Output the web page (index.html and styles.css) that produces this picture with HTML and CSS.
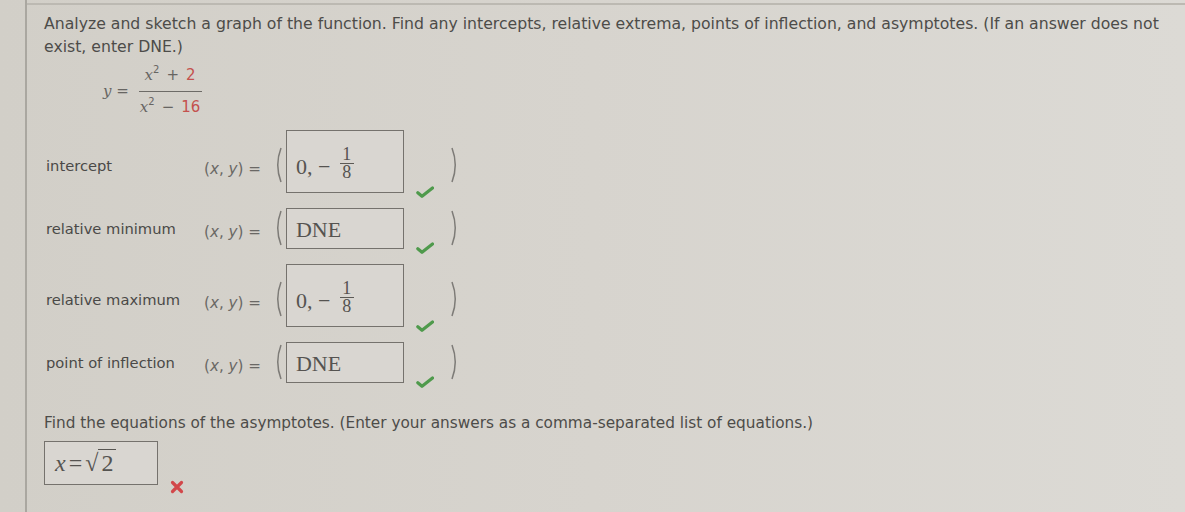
FILE: index.html
```html
<!DOCTYPE html>
<html lang="en">
<head>
<meta charset="utf-8">
<title>Analyze and sketch a graph</title>
<link rel="stylesheet" href="styles.css">
</head>
<body>
<div class="frame">
  <div class="panel">
    <p class="prompt">Analyze and sketch a graph of the function. Find any intercepts, relative extrema, points of inflection, and asymptotes. (If an answer does not exist, enter DNE.)</p>

    <div class="function">
      <span class="lhs"><i>y</i> =</span>
      <span class="frac">
        <span class="num"><i>x</i><sup>2</sup><span class="op">+</span><span class="red">2</span></span>
        <span class="den"><i>x</i><sup>2</sup><span class="op">−</span><span class="red">16</span></span>
      </span>
    </div>

    <div class="rows">
      <div class="row">
        <span class="label">intercept</span>
        <span class="xy">(<i>x</i>, <i>y</i>) = <svg class="paren" viewBox="0 0 8 36" width="8" height="36"><path d="M7 1 Q0.5 18 7 35" fill="none" stroke="#7d7b77" stroke-width="1.5"/></svg></span>
        <span class="box tall">0, − <span class="mfrac"><span>1</span><span class="bar"></span><span>8</span></span></span>
        <svg class="check" viewBox="0 0 18 12" width="18" height="12"><path d="M1.8 6.8 L6 10.3 L16.5 2" fill="none" stroke="#4f9a4c" stroke-width="3.2" stroke-linecap="round" stroke-linejoin="round"/></svg>
        <span class="cp"><svg class="paren" viewBox="0 0 8 36" width="8" height="36"><path d="M1 1 Q7.5 18 1 35" fill="none" stroke="#7d7b77" stroke-width="1.5"/></svg></span>
      </div>

      <div class="row">
        <span class="label">relative minimum</span>
        <span class="xy">(<i>x</i>, <i>y</i>) = <svg class="paren" viewBox="0 0 8 36" width="8" height="36"><path d="M7 1 Q0.5 18 7 35" fill="none" stroke="#7d7b77" stroke-width="1.5"/></svg></span>
        <span class="box short">DNE</span>
        <svg class="check" viewBox="0 0 18 12" width="18" height="12"><path d="M1.8 6.8 L6 10.3 L16.5 2" fill="none" stroke="#4f9a4c" stroke-width="3.2" stroke-linecap="round" stroke-linejoin="round"/></svg>
        <span class="cp"><svg class="paren" viewBox="0 0 8 36" width="8" height="36"><path d="M1 1 Q7.5 18 1 35" fill="none" stroke="#7d7b77" stroke-width="1.5"/></svg></span>
      </div>

      <div class="row">
        <span class="label">relative maximum</span>
        <span class="xy">(<i>x</i>, <i>y</i>) = <svg class="paren" viewBox="0 0 8 36" width="8" height="36"><path d="M7 1 Q0.5 18 7 35" fill="none" stroke="#7d7b77" stroke-width="1.5"/></svg></span>
        <span class="box tall">0, − <span class="mfrac"><span>1</span><span class="bar"></span><span>8</span></span></span>
        <svg class="check" viewBox="0 0 18 12" width="18" height="12"><path d="M1.8 6.8 L6 10.3 L16.5 2" fill="none" stroke="#4f9a4c" stroke-width="3.2" stroke-linecap="round" stroke-linejoin="round"/></svg>
        <span class="cp"><svg class="paren" viewBox="0 0 8 36" width="8" height="36"><path d="M1 1 Q7.5 18 1 35" fill="none" stroke="#7d7b77" stroke-width="1.5"/></svg></span>
      </div>

      <div class="row">
        <span class="label">point of inflection</span>
        <span class="xy">(<i>x</i>, <i>y</i>) = <svg class="paren" viewBox="0 0 8 36" width="8" height="36"><path d="M7 1 Q0.5 18 7 35" fill="none" stroke="#7d7b77" stroke-width="1.5"/></svg></span>
        <span class="box short">DNE</span>
        <svg class="check" viewBox="0 0 18 12" width="18" height="12"><path d="M1.8 6.8 L6 10.3 L16.5 2" fill="none" stroke="#4f9a4c" stroke-width="3.2" stroke-linecap="round" stroke-linejoin="round"/></svg>
        <span class="cp"><svg class="paren" viewBox="0 0 8 36" width="8" height="36"><path d="M1 1 Q7.5 18 1 35" fill="none" stroke="#7d7b77" stroke-width="1.5"/></svg></span>
      </div>
    </div>

    <p class="prompt second">Find the equations of the asymptotes. (Enter your answers as a comma-separated list of equations.)</p>

    <div class="answer">
      <span class="box eq"><i>x</i><span class="eqs">=</span>√<span class="radicand">2</span></span>
      <svg class="cross" viewBox="0 0 14 14" width="14" height="14"><path d="M2.5 2.5 L11.5 11.5 M11.5 2.5 L2.5 11.5" fill="none" stroke="#d2474a" stroke-width="3.2" stroke-linecap="round"/></svg>
    </div>
  </div>
</div>
</body>
</html>
```

FILE: styles.css
```css
html, body {
  margin: 0;
  padding: 0;
}

body {
  width: 1185px;
  height: 512px;
  overflow: hidden;
  background: linear-gradient(to right, #d2cfc8 0%, #d7d4ce 50%, #dcdad5 100%);
  font-family: "DejaVu Sans", Verdana, sans-serif;
  color: #4d4c49;
}

.frame {
  margin-left: 25px;
  border-left: 2px solid #aaa7a0;
  height: 512px;
  box-sizing: border-box;
  padding-top: 3px;
}

.panel {
  border-top: 2px solid #bcb9b2;
  padding: 7px 0 0 17px;
}

.prompt {
  margin: 0;
  font-size: 15.7px;
  line-height: 23px;
  width: 1135px;
}

.function {
  display: flex;
  align-items: center;
  margin: 6px 0 0 59px;
  font-size: 15px;
  color: #676562;
}

.function i {
  font-family: "DejaVu Serif", serif;
}

.lhs {
  margin-right: 5px;
}

.frac {
  display: inline-flex;
  flex-direction: column;
  align-items: center;
}

.frac .num,
.frac .den {
  line-height: 22px;
  padding: 0 6px;
}

.frac .num {
  border-bottom: 1px solid #6d6b67;
  padding-bottom: 5px;
}

.frac .den {
  padding-top: 4px;
}

.frac sup {
  font-size: 10px;
  vertical-align: 7px;
  line-height: 0;
}

.op {
  margin: 0 7px;
}

.red {
  color: #c4514e;
}

.rows {
  display: flex;
  flex-direction: column;
  gap: 15px;
  margin-top: 12px;
  margin-left: 2px;
}

.row {
  display: flex;
  align-items: baseline;
}

.label {
  width: 158px;
  font-size: 14.7px;
  color: #4a4947;
  position: relative;
  top: -3px;
}

.xy {
  font-size: 15.2px;
  color: #6a6865;
  white-space: nowrap;
}

.xy i {
  font-family: "DejaVu Sans", sans-serif;
}

.paren {
  vertical-align: -9px;
}

.xy .paren {
  margin-left: 8px;
  margin-right: 4px;
}

.cp {
  margin-left: 17px;
}

.box {
  display: inline-block;
  box-sizing: border-box;
  width: 118px;
  border: 1.5px solid #75726d;
  background: #d9d6d1;
  font-family: "Liberation Serif", "Times New Roman", serif;
  font-size: 22px;
  line-height: 24px;
  color: #555350;
  padding-left: 9px;
  white-space: nowrap;
}

.box.tall {
  height: 63px;
  padding-top: 15px;
}

.box.short {
  height: 41px;
  padding-top: 9px;
}

.mfrac {
  display: inline-flex;
  flex-direction: column;
  align-items: center;
  vertical-align: 14px;
  font-size: 18px;
  line-height: 17px;
  margin-left: 4px;
}

.mfrac .bar {
  width: 14px;
  height: 1px;
  background: #5c5a56;
}

.check {
  align-self: flex-end;
  margin-left: 12px;
  margin-bottom: -5px;
}

.second {
  margin-top: 29px;
  font-size: 15.3px;
}

.answer {
  display: flex;
  align-items: flex-end;
  margin-top: 6px;
}

.box.eq {
  width: 114px;
  height: 44px;
  padding-top: 9px;
  padding-left: 10px;
  font-size: 24px;
}

.box.eq i {
  font-family: "Liberation Serif", serif;
}

.eqs {
  margin: 0 3px;
}

.radicand {
  border-top: 1.5px solid #575551;
  padding: 0 3px;
}

.cross {
  margin-left: 12px;
  margin-bottom: -9px;
}
```
